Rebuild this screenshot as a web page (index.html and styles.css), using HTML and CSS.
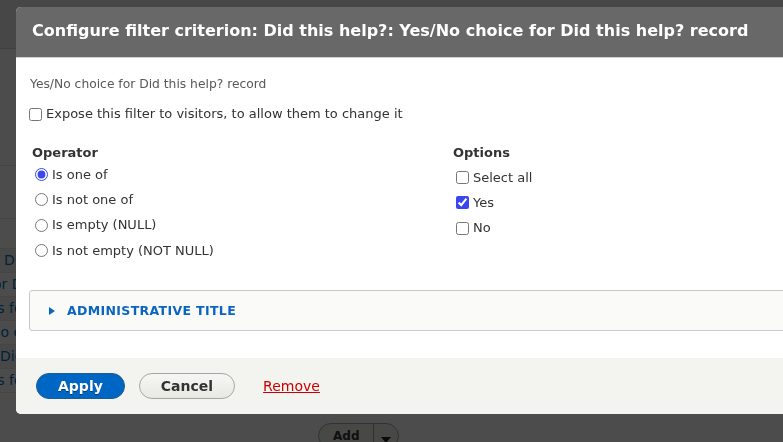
FILE: index.html
```html
<!DOCTYPE html>
<html lang="en">
<head>
<meta charset="utf-8">
<title>Configure filter criterion</title>
<link rel="stylesheet" href="styles.css">
</head>
<body>
<div class="page">
  <div class="page-header"></div>
  <div class="page-rows">
    <div class="prow tall"><a class="i1" href="#">Fields</a></div>
    <div class="prow gap"></div>
    <div class="prow alt"><a class="i2" href="#">Did this help</a></div>
    <div class="prow"><a class="i3" href="#">for Did this</a></div>
    <div class="prow alt"><a class="i4" href="#">Yes for this</a></div>
    <div class="prow"><a class="i5" href="#">No choice</a></div>
    <div class="prow alt"><a class="i6" href="#">Did this help</a></div>
    <div class="prow"><a class="i4" href="#">Yes for this</a></div>
  </div>
  <div class="page-actions">
    <div class="dropbutton"><span class="db-main">Add</span><span class="db-toggle"><svg width="10" height="6" viewBox="0 0 10 6"><path d="M0 0h10L5 6z" fill="#222"/></svg></span></div>
  </div>
</div>
<div class="overlay"></div>
<div class="dialog">
  <div class="titlebar">Configure filter criterion: Did this help?: Yes/No choice for Did this help? record</div>
  <div class="content">
    <div class="description">Yes/No choice for Did this help? record</div>
    <label class="expose"><input type="checkbox"> Expose this filter to visitors, to allow them to change it</label>
    <div class="columns">
      <div class="col col-op">
        <div class="col-title">Operator</div>
        <label class="opt"><input type="radio" name="op" checked> Is one of</label>
        <label class="opt"><input type="radio" name="op"> Is not one of</label>
        <label class="opt"><input type="radio" name="op"> Is empty (NULL)</label>
        <label class="opt"><input type="radio" name="op"> Is not empty (NOT NULL)</label>
      </div>
      <div class="col col-options">
        <div class="col-title">Options</div>
        <label class="opt"><input type="checkbox"> Select all</label>
        <label class="opt"><input type="checkbox" checked> Yes</label>
        <label class="opt"><input type="checkbox"> No</label>
      </div>
    </div>
    <div class="details">
      <span class="tri"></span><span class="details-title">Administrative title</span>
    </div>
  </div>
  <div class="buttonpane">
    <button class="btn primary">Apply</button>
    <button class="btn">Cancel</button>
    <a class="remove" href="#">Remove</a>
  </div>
</div>
</body>
</html>
```
FILE: styles.css
```css
html, body {
  margin: 0;
  padding: 0;
}
body {
  font-family: "DejaVu Sans", sans-serif;
  background: #fff;
  color: #333;
  width: 783px;
  height: 442px;
  overflow: hidden;
  accent-color: #3a46f0;
}
.page-header {
  height: 48px;
  background: #ededed;
  border-bottom: 1px solid #d4d4d4;
}
.prow {
  height: 23px;
  line-height: 23px;
  border-bottom: 1px solid #e6e6e6;
  font-size: 14px;
  white-space: nowrap;
  overflow: hidden;
  background: #fff;
}
.prow.tall {
  height: 54px;
  margin-top: 116px;
  padding-top: 33px;
  box-sizing: border-box;
  line-height: 20px;
  border-top: 1px solid #e6e6e6;
}
.prow.gap {
  height: 29px;
}
.prow.alt {
  background: #f2f2f2;
}
.prow a {
  color: #0074bd;
  text-decoration: none;
  display: inline-block;
}
.i1 { margin-left: -44px; }
.i2 { margin-left: 4px; }
.i3 { margin-left: -12px; }
.i4 { margin-left: -18px; }
.i5 { margin-left: -10px; }
.i6 { margin-left: 0; }
.page-actions {
  padding: 30px 0 0 318px;
}
.dropbutton {
  display: inline-flex;
  border: 1px solid #a6a6a6;
  border-radius: 20px;
  background: #f2f1eb;
  height: 24px;
  font-size: 12px;
  font-weight: bold;
  color: #333;
}
.db-main {
  padding: 5px 14px 0 14px;
  border-right: 1px solid #a6a6a6;
}
.db-toggle {
  padding: 8px 7px 0 7px;
}
.overlay {
  position: fixed;
  inset: 0;
  background: rgba(0, 0, 0, 0.7);
}
.dialog {
  position: fixed;
  left: 16px;
  top: 7px;
  width: 820px;
  height: 407px;
  border-radius: 5px;
  background: #fff;
  overflow: hidden;
  display: flex;
  flex-direction: column;
}
.titlebar {
  box-sizing: border-box;
  height: 51px;
  line-height: 48px;
  background: #686868;
  border-bottom: 1px solid #cfcfcf;
  color: #fff;
  font-weight: bold;
  font-size: 16px;
  padding-left: 16px;
  white-space: nowrap;
}
.content {
  flex: 1;
  padding: 18px 0 0 13px;
}
.description {
  font-size: 12.3px;
  color: #595959;
  line-height: 17px;
  padding-left: 1px;
}
.expose {
  display: flex;
  align-items: center;
  margin-top: 12px;
  font-size: 13px;
  line-height: 18px;
  color: #333;
}
.expose input {
  margin: 0 4px 0 0;
}
.columns {
  display: flex;
  margin-top: 22px;
  padding-left: 3px;
}
.col-op {
  width: 421px;
}
.col-title {
  font-weight: bold;
  font-size: 13px;
  line-height: 16px;
  margin-bottom: 1px;
}
.col-options .col-title {
  margin-bottom: 4px;
}
.opt {
  display: flex;
  align-items: center;
  font-size: 13px;
  line-height: 18px;
  height: 25.3px;
  color: #333;
}
.opt input {
  margin: 0 4px 0 3px;
}
.details {
  margin-top: 27px;
  height: 39px;
  border: 1px solid #c8c8c8;
  border-radius: 3px;
  background: #fafaf8;
  display: flex;
  align-items: center;
  padding-left: 19px;
}
.tri {
  width: 0;
  height: 0;
  border-left: 6px solid #0a65c2;
  border-top: 4px solid transparent;
  border-bottom: 4px solid transparent;
  margin-right: 12px;
}
.details-title {
  color: #0a65c2;
  font-weight: bold;
  font-size: 12.5px;
  text-transform: uppercase;
  letter-spacing: 0.35px;
}
.buttonpane {
  height: 56px;
  background: #f3f4ef;
  display: flex;
  align-items: center;
  padding-left: 20px;
  gap: 14px;
}
.btn {
  font-family: "DejaVu Sans", sans-serif;
  font-weight: bold;
  font-size: 14px;
  height: 26px;
  padding: 0 21px;
  border-radius: 20px;
  border: 1px solid #a6a6a6;
  background: linear-gradient(#f6f6f3, #e8e8e3);
  color: #333;
}
.btn.primary {
  background: #0066c4;
  border-color: #1e5c90;
  color: #fff;
  padding: 0 21px;
  text-shadow: 0 1px 0 rgba(0,0,0,0.4);
}
.remove {
  color: #c00;
  font-size: 14px;
  margin-left: 14px;
}
```
